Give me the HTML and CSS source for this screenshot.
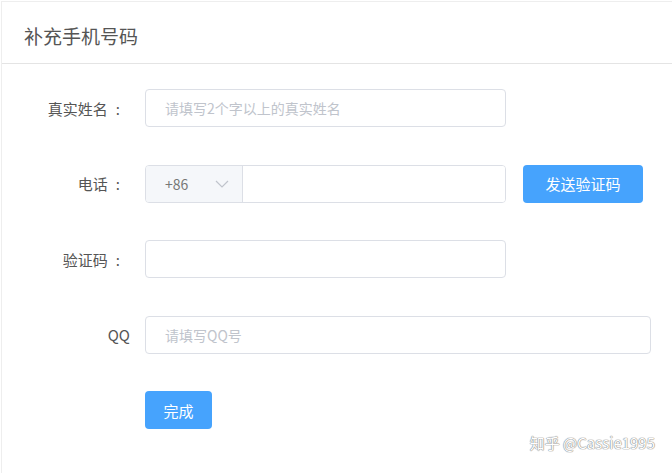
FILE: index.html
```html
<!DOCTYPE html>
<html lang="zh-CN">
<head>
    <meta charset="UTF-8">
    <meta name="viewport" content="width=device-width, initial-scale=1.0">
    <title>补充手机号码</title>
    <link rel="stylesheet" href="styles.css">
</head>
<body>

<!-- 补充手机号码 card -->
<div class="card">
    <div class="card-header">补充手机号码</div>

    <div class="form">
        <div class="form-row">
            <label class="form-label">真实姓名<span class="colon">:</span></label>
            <input class="text-input" type="text" placeholder="请填写2个字以上的真实姓名">
        </div>

        <div class="form-row">
            <label class="form-label">电话<span class="colon">:</span></label>
            <div class="phone-group">
                <div class="prefix">
                    <span>+86</span>
                    <svg class="chevron" width="14" height="8" viewBox="0 0 14 8">
                        <path d="M1 1 L7 7 L13 1" fill="none" stroke="#c0c4cc" stroke-width="1.2"/>
                    </svg>
                </div>
                <input class="phone-input" type="text">
            </div>
            <button class="btn send-btn">发送验证码</button>
        </div>

        <div class="form-row">
            <label class="form-label">验证码<span class="colon">:</span></label>
            <input class="text-input" type="text">
        </div>

        <div class="form-row">
            <label class="form-label">QQ</label>
            <input class="text-input wide" type="text" placeholder="请填写QQ号">
        </div>

        <div class="form-row">
            <span class="form-label"></span>
            <button class="btn done-btn">完成</button>
        </div>
    </div>
</div>

<div class="watermark">知乎 @Cassie1995</div>

</body>
</html>
```

FILE: styles.css
```css
body {
    margin: 0;
    font-family: "Noto Sans CJK SC", "Noto Sans", sans-serif;
    background-color: #fff;
    color: #606266;
}

.card {
    margin: 1px 0 0 1px;
    border-top: 1px solid #eeeeee;
    border-left: 1px solid #eeeeee;
    height: 472px;
    box-sizing: border-box;
}

.card-header {
    height: 62px;
    box-sizing: border-box;
    padding: 10px 0 0 22px;
    line-height: 48px;
    font-size: 19px;
    color: #555;
    border-bottom: 1px solid #e4e4e4;
}

.form {
    padding-top: 25px;
}

.form-row {
    display: flex;
    align-items: center;
    height: 38px;
    margin-bottom: 37.5px;
}

.form-label {
    width: 128px;
    text-align: right;
    font-size: 15px;
    color: #555;
    margin-right: 15px;
    flex-shrink: 0;
}

.colon {
    margin-left: 8px;
    margin-right: 10px;
}

input {
    box-sizing: border-box;
    height: 38px;
    border: 1px solid #dcdfe6;
    border-radius: 4px;
    font-family: inherit;
    font-size: 14px;
    padding: 0 19px;
    color: #606266;
    outline: none;
}

input::placeholder {
    color: #c0c4cc;
}

.text-input {
    width: 361px;
}

.text-input.wide {
    width: 506px;
}

.phone-group {
    display: flex;
    width: 361px;
    height: 38px;
    box-sizing: border-box;
    border: 1px solid #dcdfe6;
    border-radius: 4px;
    overflow: hidden;
}

.prefix {
    width: 97px;
    background: #f5f7fa;
    border-right: 1px solid #dcdfe6;
    display: flex;
    align-items: center;
    padding-left: 19px;
    box-sizing: border-box;
    font-size: 14px;
    color: #777;
}

.chevron {
    margin-left: 27px;
}

.phone-input {
    flex: 1;
    border: none;
    border-radius: 0;
    height: 36px;
}

.btn {
    height: 38px;
    border: none;
    border-radius: 4px;
    background: #46a3fd; /* element blue */
    color: white;
    font-family: inherit;
    font-size: 15px;
    cursor: pointer;
}

.send-btn {
    width: 120px;
    margin-left: 17px;
}

.done-btn {
    width: 67px;
}

.watermark {
    position: absolute;
    right: 17px;
    bottom: 21px;
    font-size: 15px;
    color: #fff;
    text-shadow: 0 0 1px #888, 0 0 1px #888, 0 0 1px #999;
}
```
